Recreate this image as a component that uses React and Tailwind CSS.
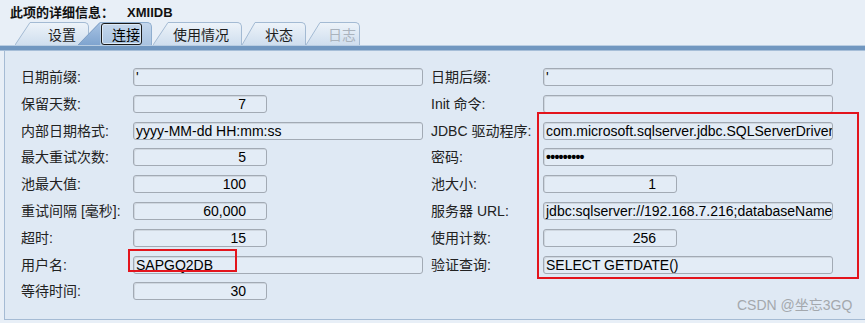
import React from 'react';

const leftRows = [
  { label: '日期前缀:', value: "'", wide: true },
  { label: '保留天数:', value: '7' },
  { label: '内部日期格式:', value: 'yyyy-MM-dd HH:mm:ss', wide: true },
  { label: '最大重试次数:', value: '5' },
  { label: '池最大值:', value: '100' },
  { label: '重试间隔 [毫秒]:', value: '60,000' },
  { label: '超时:', value: '15' },
  { label: '用户名:', value: 'SAPGQ2DB', wide: true },
  { label: '等待时间:', value: '30' },
];

const rightRows = [
  { label: '日期后缀:', value: "'", wide: true },
  { label: 'Init 命令:', value: '', wide: true },
  { label: 'JDBC 驱动程序:', value: 'com.microsoft.sqlserver.jdbc.SQLServerDriver', wide: true },
  { label: '密码:', value: '•••••••••', wide: true, password: true },
  { label: '池大小:', value: '1' },
  { label: '服务器 URL:', value: 'jdbc:sqlserver://192.168.7.216;databaseName', wide: true },
  { label: '使用计数:', value: '256' },
  { label: '验证查询:', value: 'SELECT GETDATE()', wide: true },
];

function Slant({ id, width, from, to, stroke }) {
  return (
    <svg width={width} height="23" className="block shrink-0">
      <defs>
        <linearGradient id={id} x1="0" y1="0" x2="0" y2="1">
          <stop offset="0" stopColor={from} />
          <stop offset="1" stopColor={to} />
        </linearGradient>
      </defs>
      <polygon points={`0,23 ${width},0 ${width},23`} fill={`url(#${id})`} />
      <line x1="0" y1="23" x2={width} y2="0.5" stroke={stroke} strokeWidth="1" />
    </svg>
  );
}

function Tab({ id, label, slant, bodyClass, disabled, className = '' }) {
  return (
    <div className={`flex h-[23px] ${className}`}>
      <Slant id={id} width={slant} from="#edf3f9" to="#cfdeee" stroke="#a3bad3" />
      <div
        className={`h-[23px] border-t border-r border-[#a3bad3] rounded-tr-[5px] bg-gradient-to-b from-[#edf3f9] to-[#cfdeee] pt-[4px] text-[14px] leading-[16px] whitespace-nowrap ${bodyClass} ${
          disabled ? 'text-[#aab3bd]' : 'text-[#1d1d1d]'
        }`}
      >
        {label}
      </div>
    </div>
  );
}

function Field({ value, wide, password }) {
  return (
    <div
      className={`h-[18px] rounded-[3px] border border-[#a2aab4] bg-[#e3ecf6] shadow-[inset_1px_1px_0_#cfd7e0] overflow-hidden whitespace-nowrap leading-[16px] ${
        wide ? 'w-[290px] pl-[2px] text-left' : 'w-[134px] pr-[20px] text-right'
      } ${password ? 'text-[14px] font-bold tracking-[-0.7px]' : 'text-[14px]'} text-black`}
    >
      {value}
    </div>
  );
}

function Column({ rows }) {
  return (
    <div className="flex flex-col gap-y-[8.8px]">
      {rows.map((row) => (
        <div key={row.label} className="flex items-center h-[18px]">
          <div className="w-[112px] text-[14px] leading-[16px] text-[#222] whitespace-nowrap">{row.label}</div>
          <Field value={row.value} wide={row.wide} password={row.password} />
        </div>
      ))}
    </div>
  );
}

export default function App() {
  return (
    <div
      className="relative w-[865px] h-[323px] overflow-hidden bg-[#e8eff7]"
      style={{ fontFamily: '"Liberation Sans", "Noto Sans CJK SC", sans-serif' }}
    >
      {/* title */}
      <div className="h-[22px] pl-[10px] pt-[5px] text-[13px] leading-[15px] font-bold text-[#111] whitespace-nowrap">
        此项的详细信息：<span className="ml-[13px]">XMIIDB</span>
      </div>

      {/* tabs */}
      <div className="flex items-end h-[23px] pl-[15px]">
        <Tab id="t1" label="设置" slant={15} bodyClass="w-[59px] pl-[18px]" />
        <div className="relative z-10 flex h-[23px] -ml-[11px]">
          <Slant id="t2" width={22} from="#a9c4e4" to="#7fa4cf" stroke="#7f9fc4" />
          <div className="h-[23px] w-[52px] border-t border-r border-[#8faecf] rounded-tr-[5px] bg-gradient-to-b from-[#c5d7ec] to-[#a9c3e0]">
            <div className="ml-[1px] h-[22px] w-[41px] rounded-[3px] border border-[#1a1a1a] shadow-[inset_0_0_0_1px_#dce8f4] pl-[10px] pt-[3px] text-[14px] leading-[16px] text-black">
              连接
            </div>
          </div>
        </div>
        <Tab id="t3" label="使用情况" slant={15} bodyClass="w-[74px] pl-[5px]" className="ml-[1px]" />
        <Tab id="t4" label="状态" slant={13} bodyClass="w-[51px] pl-[10px]" />
        <Tab id="t5" label="日志" slant={14} bodyClass="w-[40px] pl-[8px]" disabled />
      </div>

      {/* blue bar */}
      <div className="h-[6px] border-t border-[#b9cde2] bg-[#7197c0] border-b-[1px] border-b-[#a6bed8]" />

      {/* panel */}
      <div className="ml-[4px] h-[269px] border-l border-b border-[#a5bbd4] bg-[#dfe9f4] pl-[16px] pt-[17px]">
        <div className="flex gap-x-[8px]">
          <Column rows={leftRows} />
          <Column rows={rightRows} />
        </div>
      </div>

      {/* watermark */}
      <div className="absolute left-[737px] top-[297px] text-[14px] leading-[16px] text-[#a4a8ad] whitespace-nowrap">
        CSDN @坐忘3GQ
      </div>

      {/* red annotation boxes */}
      <div className="absolute left-[537px] top-[112px] w-[322px] h-[167px] border-2 border-[#e3141c]" />
      <div className="absolute left-[128px] top-[249px] w-[109px] h-[23px] border-2 border-[#e3141c]" />
    </div>
  );
}
